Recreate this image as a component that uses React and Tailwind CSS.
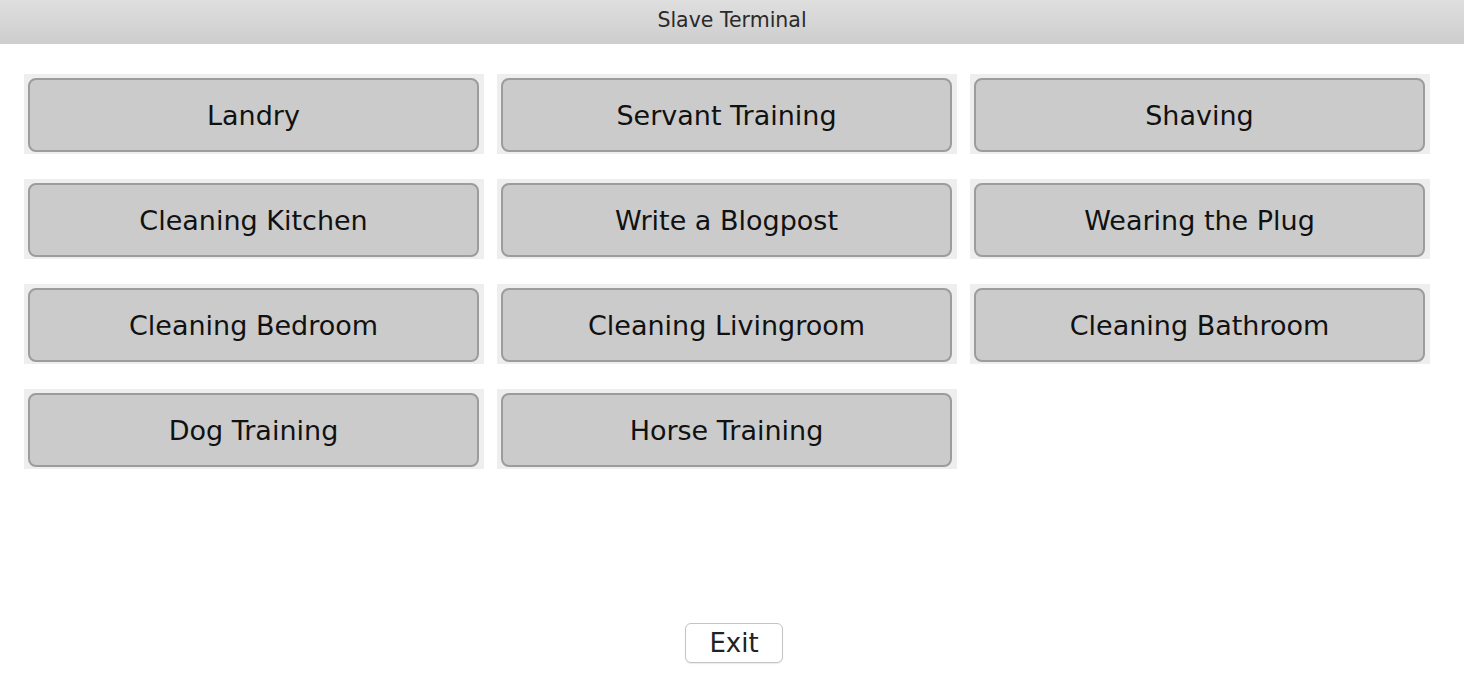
const tasks = [
  'Landry',
  'Servant Training',
  'Shaving',
  'Cleaning Kitchen',
  'Write a Blogpost',
  'Wearing the Plug',
  'Cleaning Bedroom',
  'Cleaning Livingroom',
  'Cleaning Bathroom',
  'Dog Training',
  'Horse Training',
]

function TaskButton({ label }) {
  return (
    <div className="h-[80px] bg-[#eeeeee] pt-1 pb-0.5 pl-1 pr-[5px]">
      <button className="w-full h-full pt-[3px] rounded-lg border-2 border-[#9c9c9c] bg-[#cbcbcb] text-[27px] text-[#111] cursor-pointer">
        {label}
      </button>
    </div>
  )
}

export default function App() {
  return (
    <div className="w-full h-[686px] flex flex-col bg-white" style={{ fontFamily: '"DejaVu Sans", "Noto Sans", sans-serif' }}>
      {/* title bar */}
      <div className="h-11 shrink-0 flex items-center justify-center pb-1 bg-gradient-to-b from-[#dfdfdf] to-[#cdcdcd] text-[20.5px] text-[#2a2a2a]">
        Slave Terminal
      </div>

      {/* task grid */}
      <div className="grid grid-cols-[460px_460px_460px] gap-x-[13px] gap-y-[25px] pt-[30px] pl-6">
        {tasks.map((t) => (
          <TaskButton key={t} label={t} />
        ))}
      </div>

      {/* exit */}
      <div className="mt-auto flex justify-center pb-[23px] pl-1">
        <button className="w-[98px] h-10 rounded-md border border-[#c4c4c4] bg-white text-[26px] text-[#222] shadow-[0_1px_1px_rgba(0,0,0,0.08)] cursor-pointer">
          Exit
        </button>
      </div>
    </div>
  )
}
